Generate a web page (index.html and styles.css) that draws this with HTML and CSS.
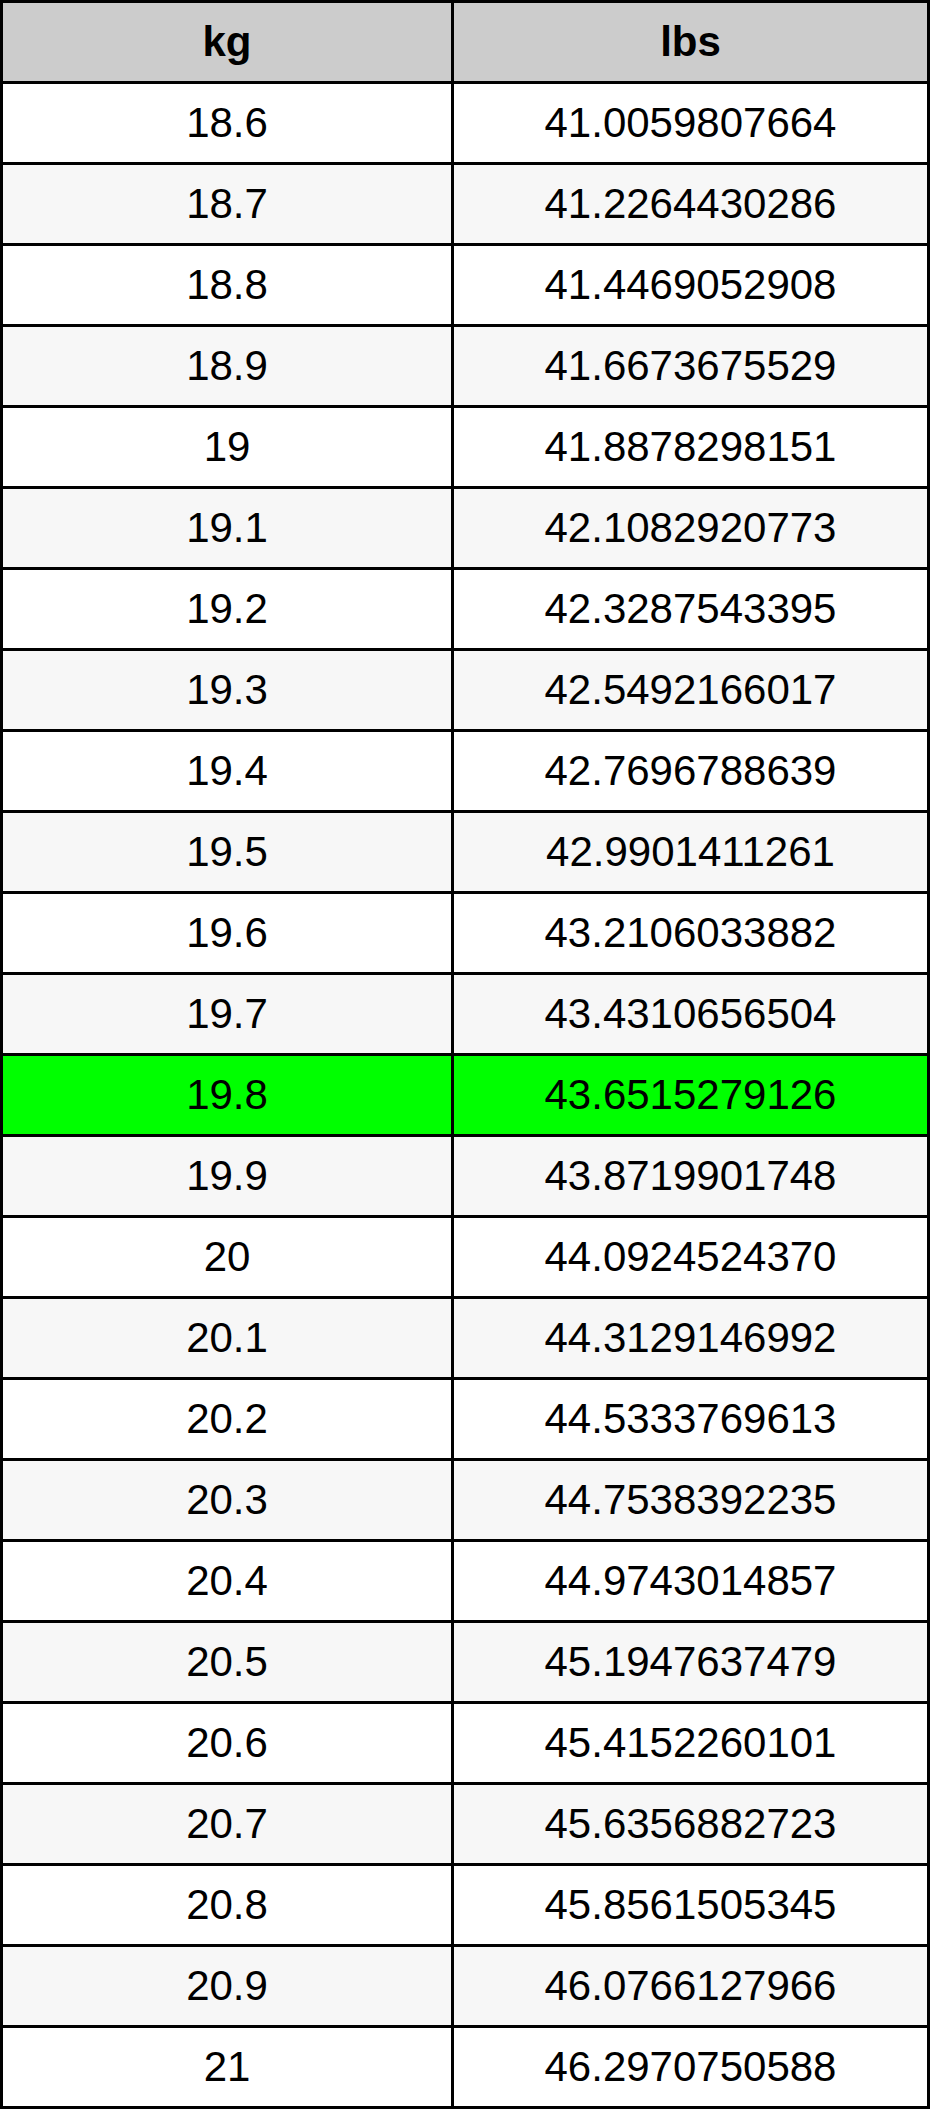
FILE: index.html
```html
<!DOCTYPE html>
<html>
<head>
<meta charset="utf-8">
<link rel="stylesheet" href="styles.css">
</head>
<body>
<table class="conv">
<thead>
<tr><th class="kg">kg</th><th class="lbs">lbs</th></tr>
</thead>
<tbody>
<tr><td>18.6</td><td>41.0059807664</td></tr>
<tr class="alt"><td>18.7</td><td>41.2264430286</td></tr>
<tr><td>18.8</td><td>41.4469052908</td></tr>
<tr class="alt"><td>18.9</td><td>41.6673675529</td></tr>
<tr><td>19</td><td>41.8878298151</td></tr>
<tr class="alt"><td>19.1</td><td>42.1082920773</td></tr>
<tr><td>19.2</td><td>42.3287543395</td></tr>
<tr class="alt"><td>19.3</td><td>42.5492166017</td></tr>
<tr><td>19.4</td><td>42.7696788639</td></tr>
<tr class="alt"><td>19.5</td><td>42.9901411261</td></tr>
<tr><td>19.6</td><td>43.2106033882</td></tr>
<tr class="alt"><td>19.7</td><td>43.4310656504</td></tr>
<tr class="hl"><td>19.8</td><td>43.6515279126</td></tr>
<tr class="alt"><td>19.9</td><td>43.8719901748</td></tr>
<tr><td>20</td><td>44.0924524370</td></tr>
<tr class="alt"><td>20.1</td><td>44.3129146992</td></tr>
<tr><td>20.2</td><td>44.5333769613</td></tr>
<tr class="alt"><td>20.3</td><td>44.7538392235</td></tr>
<tr><td>20.4</td><td>44.9743014857</td></tr>
<tr class="alt"><td>20.5</td><td>45.1947637479</td></tr>
<tr><td>20.6</td><td>45.4152260101</td></tr>
<tr class="alt"><td>20.7</td><td>45.6356882723</td></tr>
<tr><td>20.8</td><td>45.8561505345</td></tr>
<tr class="alt"><td>20.9</td><td>46.0766127966</td></tr>
<tr><td>21</td><td>46.2970750588</td></tr>
</tbody>
</table>
</body>
</html>
```
FILE: styles.css
```css
html, body {
  margin: 0;
  padding: 0;
  background: #ffffff;
}
.conv {
  width: 930px;
  border-collapse: separate;
  border-spacing: 3px;
  background: #000000;
  font-family: "Liberation Sans", Arial, sans-serif;
  font-size: 42px;
  color: #000000;
}
.conv th, .conv td {
  height: 78px;
  padding: 0;
  text-align: center;
  vertical-align: middle;
  background: #ffffff;
}
.conv th {
  background: #cccccc;
  font-weight: bold;
}
.conv th.kg {
  width: 448px;
}
.conv tr.alt td {
  background: #f7f7f7;
}
.conv tr.hl td {
  background: #00ff00;
}
```
